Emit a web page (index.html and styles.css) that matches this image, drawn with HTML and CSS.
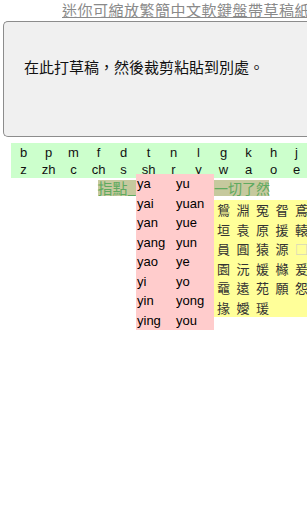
FILE: index.html
```html
<!DOCTYPE html>
<html lang="zh-Hant">
<head>
    <meta charset="UTF-8">
    <meta name="viewport" content="width=device-width, initial-scale=1.0">
    <title>迷你可縮放繁簡中文軟鍵盤帶草稿紙</title>
    <link rel="stylesheet" href="styles.css">
</head>
<body>
    <div class="title"><a href="#">迷你可縮放繁簡中文軟鍵盤帶草稿紙</a></div>

    <textarea class="draft">在此打草稿，然後裁剪粘貼到別處。</textarea>

    <div class="keys">
        <span>b</span><span>p</span><span>m</span><span>f</span><span>d</span><span>t</span>
        <span>n</span><span>l</span><span>g</span><span>k</span><span>h</span><span>j</span>
        <span>z</span><span>zh</span><span>c</span><span>ch</span><span>s</span><span>sh</span>
        <span>r</span><span>y</span><span>w</span><span>a</span><span>o</span><span>e</span>
    </div>

    <div class="panel">
        <div class="left">
            <span class="tag">指點_</span>
        </div>
        <div class="finals">
            <span>ya</span><span>yu</span>
            <span>yai</span><span>yuan</span>
            <span>yan</span><span>yue</span>
            <span>yang</span><span>yun</span>
            <span>yao</span><span>ye</span>
            <span>yi</span><span>yo</span>
            <span>yin</span><span>yong</span>
            <span>ying</span><span>you</span>
        </div>
        <div class="right">
            <span class="tag">一切了然</span>
            <div class="chars">
                <span>鴛</span><span>淵</span><span>冤</span><span>眢</span><span>鳶</span>
                <span>垣</span><span>袁</span><span>原</span><span>援</span><span>轅</span>
                <span>員</span><span>圓</span><span>猿</span><span>源</span><span class="missing">□</span>
                <span>園</span><span>沅</span><span>媛</span><span>櫞</span><span>爰</span>
                <span>黿</span><span>遠</span><span>苑</span><span>願</span><span>怨</span>
                <span>掾</span><span>嬡</span><span>瑗</span>
            </div>
        </div>
    </div>
</body>
</html>
```

FILE: styles.css
```css
html, body {
    margin: 0;
    padding: 0;
    background: #ffffff;
    overflow: hidden;
}
body {
    width: 307px;
    font-family: "Liberation Sans", Arial, "Noto Sans CJK TC", sans-serif;
}
.title {
    height: 21px;
    padding-left: 62px;
    white-space: nowrap;
    overflow: hidden;
    font-family: "Noto Sans CJK TC", sans-serif;
    font-size: 15px;
    letter-spacing: 0.5px;
    line-height: 20px;
}
.title a {
    color: #8a8a8a;
    text-decoration: underline;
}
.draft {
    display: block;
    box-sizing: border-box;
    width: 304px;
    height: 116px;
    margin: 0 0 0 3px;
    padding: 35px 0 0 20px;
    border: 1px solid #8c8c8c;
    border-right: none;
    border-radius: 5px 0 0 5px;
    background: #f0f0f0;
    color: #111111;
    font-family: "Noto Sans CJK TC", sans-serif;
    font-size: 15px;
    line-height: 20px;
    resize: none;
}
.keys {
    display: grid;
    grid-template-columns: repeat(11, 25px) 21px;
    grid-auto-rows: 17px;
    width: 296px;
    margin: 6px 0 0 11px;
    padding-top: 1px;
    background: #ccffcc;
    font-size: 13px;
    color: #111111;
}
.keys span {
    text-align: center;
    line-height: 17px;
}
.panel {
    display: flex;
    align-items: flex-start;
}
.left {
    flex: 0 0 136px;
    display: flex;
    justify-content: flex-end;
    padding-top: 2px;
}
.tag {
    display: inline-block;
    background: #c6c99e;
    color: #5faa60;
    font-family: "Noto Sans CJK TC", sans-serif;
    font-size: 14px;
    line-height: 16px;
    white-space: nowrap;
}
.left .tag {
    font-size: 15px;
}
.finals {
    flex: 0 0 78px;
    display: grid;
    grid-template-columns: 39px 39px;
    grid-auto-rows: 19.5px;
    margin-top: -4px;
    background: #ffcccc;
    font-size: 13px;
    color: #000000;
}
.finals span {
    padding-left: 1px;
    line-height: 19.5px;
}
.right {
    flex: 1;
    min-width: 0;
    overflow: hidden;
    padding-top: 2px;
}
.right .tag {
    width: 55px;
    text-align: center;
}
.chars {
    display: grid;
    grid-template-columns: repeat(5, 19.5px);
    grid-auto-rows: 19.5px;
    margin-top: 2px;
    padding-left: 3px;
    background: #ffff99;
    font-family: "Noto Sans CJK TC", sans-serif;
    font-size: 13px;
    color: #333333;
}
.chars span {
    line-height: 19.5px;
}
.chars .missing {
    color: #c8c8c8;
}
```
